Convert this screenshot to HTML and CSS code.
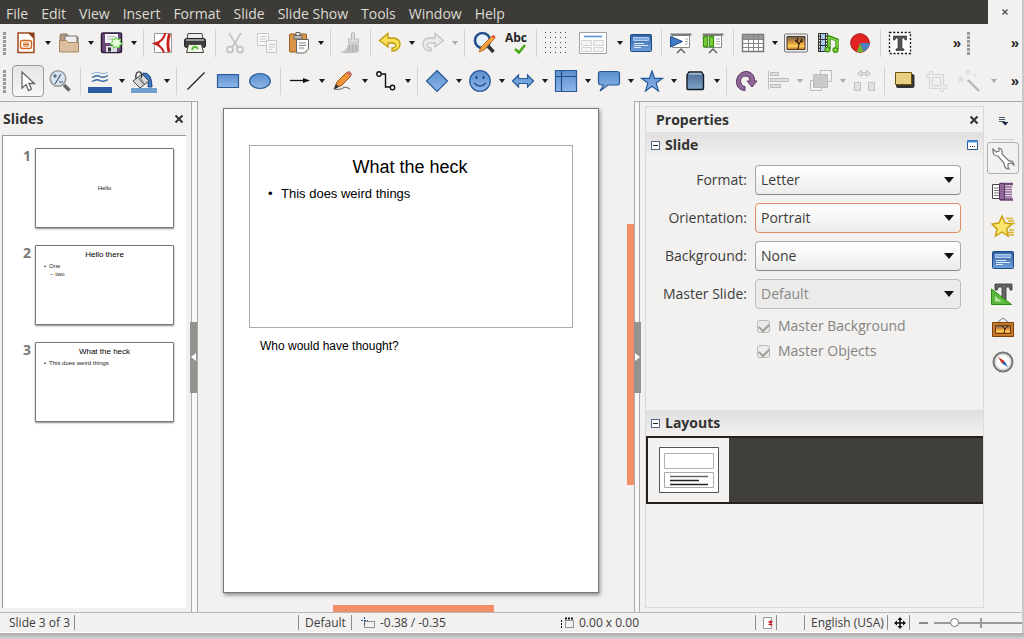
FILE: index.html
```html
<!DOCTYPE html>
<html lang="en">
<head>
  <meta charset="UTF-8">
  <title>Impress</title>
  <link rel="stylesheet" href="styles.css">
</head>
<body>

<!-- shared gradients -->
<svg class="defs" width="0" height="0" aria-hidden="true">
  <defs>
    <linearGradient id="blue" x1="0" y1="0" x2="0" y2="1"><stop offset="0" stop-color="#5b8fcf"/><stop offset="1" stop-color="#8cb6e6"/></linearGradient>
    <linearGradient id="deep" x1="0" y1="0" x2="0" y2="1"><stop offset="0" stop-color="#3465a4"/><stop offset="1" stop-color="#6f9fd8"/></linearGradient>
    <linearGradient id="sunset" x1="0" y1="0" x2="0" y2="1"><stop offset="0" stop-color="#6b5a50"/><stop offset=".5" stop-color="#e59a3a"/><stop offset=".75" stop-color="#ffd25a"/><stop offset="1" stop-color="#c8641e"/></linearGradient>
    <linearGradient id="cube" x1="0" y1="0" x2="0" y2="1"><stop offset="0" stop-color="#4a6a8c"/><stop offset="1" stop-color="#7fa5cc"/></linearGradient>
  </defs>
</svg>

<div class="window">

  <header class="menubar">
    <nav class="menus">
      <a href="#">File</a>
      <a href="#">Edit</a>
      <a href="#">View</a>
      <a href="#">Insert</a>
      <a href="#">Format</a>
      <a href="#">Slide</a>
      <a href="#">Slide Show</a>
      <a href="#">Tools</a>
      <a href="#">Window</a>
      <a href="#">Help</a>
    </nav>
    <button class="doc-close" aria-label="Close document"><svg width="8" height="8" viewBox="0 0 8 8"><path d="M1.5 1.5l5 5M6.5 1.5l-5 5" stroke="#4c4c4c" stroke-width="1.3"/></svg></button>
  </header>

  <!-- standard toolbar -->
  <div class="toolbar standard">
    <span class="grip"></span>
    <button class="tool" aria-label="New"><svg width="24" height="24" viewBox="0 0 24 24"><path d="M4 2h11l5 5v14.500H4z" fill="#fff" stroke="#a0481c" stroke-width="1.500"/><path d="M14 1.500h6.500V8z" fill="#8a3a12"/><rect x="6.500" y="9.500" width="11" height="8" rx="2" fill="none" stroke="#d3691f" stroke-width="1.500"/><path d="M9 12h6M9 13.500h6M9 15h6" stroke="#d3691f"/></svg></button>
    <button class="drop" aria-label="New options"></button>
    <button class="tool" aria-label="Open"><svg width="24" height="24" viewBox="0 0 24 24"><path d="M3 19V4l1-1h6l2 3h9v13z" fill="#b39a80" stroke="#8f7558"/><path d="M8 5h12v7H8z" fill="#eee" stroke="#777"/><path d="M2.500 21V9.500h7l2 2h10V21z" fill="#d9bf9e" stroke="#a58763"/></svg></button>
    <button class="drop" aria-label="Open options"></button>
    <button class="tool" aria-label="Save"><svg width="24" height="24" viewBox="0 0 24 24"><rect x="1.500" y="2" width="20" height="19.500" rx="1.500" fill="#6b4a78" stroke="#2f1c3b" stroke-width="1.500"/><path d="M5 3h13v9H5z" fill="#f5f5f5"/><path d="M7 5.500h8M7 8h6" stroke="#bbb"/><path d="M6 15h11v6H6z" fill="#ddd"/><path d="M8 16.500h3v4H8z" fill="#333"/><path d="M15.500 6l2 2.500 3-.5-.5 3 2.500 2-3 1-.5 3-3-1.500-2.500 1.500-.5-3-3-1 2.500-2-.5-3 3 .5z" fill="#e6ffd9" stroke="#5fd03f"/></svg></button>
    <button class="drop" aria-label="Save options"></button>
    <span class="sep"></span>
    <button class="tool" aria-label="Export as PDF"><svg width="24" height="24" viewBox="0 0 24 24"><path d="M3.500 2.500h17v19h-17z" fill="#fdfdfd" stroke="#999"/><path d="M14.500 2C13 7 9 11.500 4 12.500c4 1.500 7.500 5 9 9" fill="none" stroke="#c8201c" stroke-width="2"/><path d="M3 12.500l6-2.500-1 4.500z" fill="#c8201c"/><path d="M18.500 3q-3 9-.5 18" fill="none" stroke="#c8201c" stroke-width="2.800"/></svg></button>
    <button class="tool" aria-label="Print"><svg width="24" height="24" viewBox="0 0 24 24"><path d="M5 2.500h14l1 6H4z" fill="#eee" stroke="#444"/><rect x="1.500" y="7.500" width="21" height="9" rx="2" fill="#3c3f3d" stroke="#222"/><path d="M3 9h18" stroke="#999" stroke-width="2"/><path d="M5.500 13.500h13l2 8h-17z" fill="#eef6e4" stroke="#444"/><path d="M9 19c1-4 4-4 6-1" fill="none" stroke="#5aba35" stroke-width="2"/></svg></button>
    <span class="sep"></span>
    <button class="tool" aria-label="Cut" disabled><svg width="24" height="24" viewBox="0 0 24 24" fill="none" stroke="#c4c4c4"><path d="M6 2l8.500 14M18 2L9.500 16" stroke-width="1.700"/><circle cx="7" cy="18.500" r="3" stroke-width="1.800"/><circle cx="17" cy="18.500" r="3" stroke-width="1.800"/></svg></button>
    <button class="tool" aria-label="Copy" disabled><svg width="24" height="24" viewBox="0 0 24 24" fill="#f7f7f7" stroke="#c8c8c8"><path d="M2.500 2.500h11v12h-11z"/><path d="M5 5.500h6M5 8h6M5 10.500h6"/><path d="M11.500 9.500h10v12h-10z"/><path d="M14 13.500h6M14 16h6M14 18.500h3"/></svg></button>
    <button class="tool" aria-label="Paste"><svg width="24" height="24" viewBox="0 0 24 24"><rect x="2.500" y="3" width="17" height="18" rx="1" fill="#dc9547" stroke="#9a5d1c"/><path d="M7 4.500h8V8H7z" fill="#bbb" stroke="#666"/><path d="M9 1.500h4v3H9z" fill="#eee" stroke="#666"/><path d="M9.500 8.500h12V18l-4 4h-8z" fill="#fafafa" stroke="#666"/><path d="M12 12h7M12 14.500h7M12 17h5" stroke="#888"/></svg></button>
    <button class="drop" aria-label="Paste options"></button>
    <span class="sep"></span>
    <button class="tool" aria-label="Clone formatting" disabled><svg width="24" height="24" viewBox="0 0 24 24"><path d="M13.500 2q2-1 3 0v6h4v4h-10V8h3z" fill="#dcdcdc" stroke="#b8b8b8"/><path d="M10 13h11v7q-1 2-7 2-9 1-12-1 7-1 8-8z" fill="#c6c6c6"/><path d="M12 14l-2 6M15 14l-1 7M18 14v7" stroke="#aaa"/></svg></button>
    <span class="sep"></span>
    <button class="tool" aria-label="Undo"><svg width="24" height="24" viewBox="0 0 24 24"><path d="M1.500 9.500l8.500-7v4.500h5c10 0 9 13-1 13v-3c5 0 5-5 .5-5H10v4z" fill="#f8e05a" stroke="#c09a08" stroke-width="1.300"/></svg></button>
    <button class="drop" aria-label="Undo list"></button>
    <button class="tool" aria-label="Redo" disabled><svg width="24" height="24" viewBox="0 0 24 24"><path d="M22.500 9.500L14 2.500V7H9C-1 7 0 20 10 20v-3c-5 0-5-5-.5-5H14v4z" fill="#ebebeb" stroke="#c4c4c4" stroke-width="1.300"/></svg></button>
    <button class="drop" aria-label="Redo list" disabled></button>
    <span class="sep"></span>
    <button class="tool" aria-label="Find and replace"><svg width="24" height="24" viewBox="0 0 24 24"><path d="M16 15l5.500 6" stroke="#333" stroke-width="3.500"/><circle cx="10.500" cy="9.500" r="7.500" fill="#e8f0fa" stroke="#234f8d" stroke-width="2.600"/><path d="M7 21l2-5L20 5l2.500 2.500L12 19z" fill="#f5a13c" stroke="#a85a10" stroke-width=".8"/><path d="M20 5l2.500 2.500 1-1.500-2-2z" fill="#e33"/></svg></button>
    <button class="tool spell" aria-label="Spelling"><span>Abc</span><svg width="14" height="10" viewBox="0 0 14 10"><path d="M2 5l4 3.500L12 1" fill="none" stroke="#4ba818" stroke-width="2.600"/></svg></button>
    <span class="sep"></span>
    <button class="tool" aria-label="Display grid"><svg width="24" height="24" viewBox="0 0 24 24"><g stroke="#444" stroke-dasharray="1 4" stroke-width="1"><path d="M1 1.500h22M1 6.500h22M1 11.500h22M1 16.500h22M1 21.500h22"/></g></svg></button>
    <button class="tool wide" aria-label="Display views"><svg width="28" height="24" viewBox="0 0 28 24"><path d="M.5 1.500h27v21H.5z" fill="#fff" stroke="#a0a0a0"/><path d="M5 5.500h18" stroke="#5b93d8" stroke-width="1.600"/><path d="M2.500 9.500h10v5h-10zM14.500 9.500h10v5h-10zM2.500 16.500h10v4h-10zM14.500 16.500h10v4h-10z" fill="#f4f4f4" stroke="#d4d4d4"/></svg></button>
    <button class="drop" aria-label="Views list"></button>
    <button class="tool" aria-label="Master slide"><svg width="24" height="24" viewBox="0 0 24 24"><rect x="1.500" y="3.500" width="21" height="17" rx="1" fill="url(#deep)" stroke="#204a87"/><path d="M4.500 6.500h15v3h-15z" fill="#7eabe0" stroke="#dbe9f8" stroke-width=".7"/><path d="M5 12.500h10M5 14.500h14M5 16.500h7" stroke="#dbe9f8"/></svg></button>
    <span class="sep"></span>
    <button class="tool" aria-label="Start from first slide"><svg width="24" height="24" viewBox="0 0 24 24"><path d="M8 22l4-4 4 4" fill="none" stroke="#666" stroke-width="1.500"/><path d="M3.500 4.500h17v12h-17z" fill="#fff" stroke="#888"/><path d="M1.500 3.500h21" stroke="#777" stroke-width="2"/><path d="M16 8h3M16 10.500h3M16 13h3" stroke="#aaa"/><path d="M1.500 5.500l12 5-12 5.500z" fill="#3f7bc2" stroke="#204a87"/></svg></button>
    <button class="tool" aria-label="Start from current slide"><svg width="24" height="24" viewBox="0 0 24 24"><path d="M8 22l4-4 4 4" fill="none" stroke="#666" stroke-width="1.500"/><path d="M3.500 4.500h17v12h-17z" fill="#fff" stroke="#888"/><path d="M1.500 3.500h21" stroke="#777" stroke-width="2"/><path d="M15 8h4M15 10.500h4M15 13h4" stroke="#aaa"/><path d="M2.500 5.500h4v10h-4zM8.500 5.500h4v10h-4z" fill="#7bd13b" stroke="#3e9210" stroke-width="1.300"/></svg></button>
    <span class="sep"></span>
    <button class="tool" aria-label="Table"><svg width="24" height="24" viewBox="0 0 24 24"><path d="M1.500 3.500h21v17h-21z" fill="#fff" stroke="#777" stroke-width="1.400"/><path d="M2 4h20v4H2z" fill="#999"/><path d="M2 8.500h20M2 12.500h20M2 16.500h20M7.500 4v16M12.500 4v16M17.500 4v16" stroke="#888"/></svg></button>
    <button class="drop" aria-label="Table size"></button>
    <button class="tool" aria-label="Image"><svg width="24" height="24" viewBox="0 0 24 24"><rect x=".5" y="3" width="23" height="18" rx="1" fill="#eee" stroke="#777"/><path d="M3 5.500h18v13H3z" fill="url(#sunset)" stroke="#4a3a2a"/><path d="M14 18l1-5-4-4M15 13l3-5M13.500 11V7M16 11l3-1" stroke="#2f1a0a" stroke-width="1.200" fill="none"/></svg></button>
    <button class="tool" aria-label="Audio or video"><svg width="24" height="24" viewBox="0 0 24 24"><path d="M2 2h10v19H2z" fill="#333"/><path d="M5 3h4v5H5zM5 9h4v5H5zM5 15h4v5H5z" fill="#a9c9ee"/><path d="M3.500 3v18M10.500 3v18" stroke="#fff" stroke-dasharray="1.500 1.500"/><path d="M13 18V6l8 3v9" fill="none" stroke="#3e9210" stroke-width="3.400"/><circle cx="11.500" cy="18.500" r="2.300" fill="#8be04a" stroke="#3e9210" stroke-width="1.500"/><circle cx="19.500" cy="19" r="2.300" fill="#8be04a" stroke="#3e9210" stroke-width="1.500"/><path d="M13 16V6.500l8 3V17" fill="none" stroke="#8be04a" stroke-width="1.300"/></svg></button>
    <button class="tool" aria-label="Chart"><svg width="24" height="24" viewBox="0 0 24 24"><circle cx="12" cy="12" r="9.300" fill="#e32424" stroke="#a81010"/><path d="M12 12h9.500a9.500 9.500 0 0 1-6 8.500z" fill="#4a82c8"/><path d="M12 12l3.500 9h-6.500z" fill="#62b92c"/></svg></button>
    <span class="sep"></span>
    <button class="tool" aria-label="Text box"><svg width="24" height="24" viewBox="0 0 24 24"><path d="M1.500 1.500h21v21h-21z" fill="#fff" stroke="#111" stroke-width="1.300" stroke-dasharray="2 1.800"/><path d="M5.500 5h13v4h-1.500l-.5-2h-2.500v10.500l2 .5v1.500H8V18l2-.5V7H7.500L7 9H5.500z" fill="#555" stroke="#222" stroke-width=".6"/></svg></button>
    <button class="more first" aria-label="More commands">»</button>
    <span class="grip"></span>
    <button class="more" aria-label="More commands">»</button>
  </div>

  <!-- drawing toolbar -->
  <div class="toolbar drawing">
    <span class="grip"></span>
    <button class="tool active" aria-label="Select"><svg width="24" height="24" viewBox="0 0 24 24"><path d="M6 3v16l4-3.500 2.500 6 3-1.500L13 14.500h5.500z" fill="#fff" stroke="#666" stroke-width="1.300"/></svg></button>
    <button class="tool" aria-label="Zoom and pan"><svg width="24" height="24" viewBox="0 0 24 24"><path d="M16 16l5.500 5.500" stroke="#666" stroke-width="3.600"/><circle cx="10" cy="9.500" r="7.800" fill="#d7e4f2" stroke="#999" stroke-width="1.600"/><path d="M5 7h4M7 5v4M13 5L7 15M11 13h4" stroke="#44546a" stroke-width="1.100"/></svg></button>
    <span class="sep"></span>
    <button class="tool" aria-label="Line color"><svg width="24" height="24" viewBox="0 0 24 24"><path d="M3 5q5-3 9-1t8-1" fill="none" stroke="#8aaedb"/><path d="M4 8.500q5-3 8-1t8-1M4 12.500q5-3 8-1t8-1" fill="none" stroke="#3465a4" stroke-width="1.400"/><path d="M0 18h24v6H0z" fill="#2a5da4"/></svg></button>
    <button class="drop" aria-label="Line colors"></button>
    <button class="tool fill" aria-label="Area color"><svg width="26" height="24" viewBox="0 0 26 24"><path d="M12 4q9-1 9 14h-4q1-9-5-10z" fill="#3d77bd" stroke="#204a87"/><path d="M2 12l9-7 7 7-9 7z" fill="#d5d8da" stroke="#444"/><path d="M5 10q-1-8 4-7 3 2 1 6" fill="none" stroke="#333" stroke-width="1.300"/><path d="M8 9l5 6" stroke="#888" stroke-width="2"/><path d="M0 19h26v5H0z" fill="#729fcf"/></svg></button>
    <button class="drop" aria-label="Area colors"></button>
    <span class="sep"></span>
    <button class="tool" aria-label="Line"><svg width="24" height="24" viewBox="0 0 24 24"><path d="M3.500 20.500l17-17" stroke="#222" stroke-width="1.300"/></svg></button>
    <button class="tool" aria-label="Rectangle"><svg width="24" height="24" viewBox="0 0 24 24"><path d="M1.500 5.500h21v13h-21z" fill="url(#blue)" stroke="#285a9b" stroke-width="1.200"/></svg></button>
    <button class="tool" aria-label="Ellipse"><svg width="24" height="24" viewBox="0 0 24 24"><ellipse cx="12" cy="12" rx="10.300" ry="7.500" fill="url(#blue)" stroke="#285a9b" stroke-width="1.200"/></svg></button>
    <span class="sep"></span>
    <button class="tool" aria-label="Arrow"><svg width="24" height="24" viewBox="0 0 24 24"><path d="M2 11.500h14" stroke="#111" stroke-width="1.300"/><path d="M15 9l7 2.500-7 2.500z" fill="#111"/></svg></button>
    <button class="drop" aria-label="Arrows"></button>
    <button class="tool" aria-label="Curve"><svg width="24" height="24" viewBox="0 0 24 24"><path d="M3 20q7 1 9-1t7 1" fill="none" stroke="#555"/><path d="M4 18l2-5L16 3l4 4L10 17z" fill="#f2953a" stroke="#9c5610"/><path d="M15.500 3.500l4 4 1.500-2.500-3-3z" fill="#e8605c" stroke="#999" stroke-width=".6"/><path d="M2.500 20.500L5 15l3 3z" fill="#333"/></svg></button>
    <button class="drop" aria-label="Curves"></button>
    <button class="tool" aria-label="Connector"><svg width="24" height="24" viewBox="0 0 24 24" fill="#fff" stroke="#111" stroke-width="1.400"><path d="M7 5h4.500v13H17" fill="none"/><circle cx="5" cy="5" r="2.200"/><circle cx="18.500" cy="18.500" r="2.200"/></svg></button>
    <button class="drop" aria-label="Connectors"></button>
    <span class="sep"></span>
    <button class="tool" aria-label="Basic shapes"><svg width="24" height="24" viewBox="0 0 24 24"><path d="M12 1.500L22.500 12 12 22.500 1.500 12z" fill="url(#blue)" stroke="#285a9b" stroke-width="1.200"/></svg></button>
    <button class="drop" aria-label="Basic shapes list"></button>
    <button class="tool" aria-label="Symbol shapes"><svg width="24" height="24" viewBox="0 0 24 24"><circle cx="12" cy="12" r="10.300" fill="url(#blue)" stroke="#285a9b" stroke-width="1.200"/><path d="M8.500 7v3M15.500 7v3" fill="none" stroke="#204a87" stroke-width="1.800"/><path d="M6 14q6 6 12 0" fill="none" stroke="#204a87" stroke-width="1.300"/></svg></button>
    <button class="drop" aria-label="Symbol shapes list"></button>
    <button class="tool" aria-label="Block arrows"><svg width="24" height="24" viewBox="0 0 24 24"><path d="M1.500 12l6-6v3.500h9V6l6 6-6 6v-3.500h-9V18z" fill="url(#blue)" stroke="#285a9b" stroke-width="1.200"/></svg></button>
    <button class="drop" aria-label="Block arrows list"></button>
    <button class="tool" aria-label="Flowchart"><svg width="24" height="24" viewBox="0 0 24 24"><path d="M1.500 1.500h21v21h-21z" fill="url(#blue)" stroke="#285a9b" stroke-width="1.200"/><path d="M7.500 2v20M2 7.500h20" stroke="#204a87" stroke-width="1.200"/></svg></button>
    <button class="drop" aria-label="Flowchart list"></button>
    <button class="tool" aria-label="Callouts"><svg width="24" height="24" viewBox="0 0 24 24"><path d="M4 2.500h16q2.500 0 2.500 2v9q0 2.500-2.500 2.500h-9l-8 6 3.500-6H4q-2.500 0-2.500-2.500v-9q0-2 2.500-2z" fill="url(#blue)" stroke="#285a9b" stroke-width="1.200"/></svg></button>
    <button class="drop" aria-label="Callouts list"></button>
    <button class="tool" aria-label="Stars"><svg width="24" height="24" viewBox="0 0 24 24"><path d="M12 2l2.600 7.300h7.900l-6.300 4.800 2.300 7.900-6.500-4.700L5.500 22l2.300-7.900L1.500 9.300h7.900z" fill="url(#blue)" stroke="#285a9b" stroke-width="1.200"/></svg></button>
    <button class="drop" aria-label="Stars list"></button>
    <button class="tool" aria-label="3D objects"><svg width="24" height="24" viewBox="0 0 24 24"><path d="M6 3h12.500l2 3v13.500q0 1-1 1H5q-1 0-1-1V6z" fill="url(#cube)" stroke="#111a24" stroke-width="1.400"/><path d="M6.500 3.800h11.500l1.500 2h-15z" fill="#9fb6cf"/></svg></button>
    <button class="drop" aria-label="3D objects list"></button>
    <span class="sep"></span>
    <button class="tool" aria-label="Rotate"><svg width="24" height="24" viewBox="0 0 24 24"><path d="M11 21.500C-1 21.500 0 3 12 2.500c6 0 9 5 8.500 9.500H23l-5 6-5-6h3c0-3-2-5-4.500-5C5 7 5 17 11 17.500z" fill="#8f6797" stroke="#5c3566"/></svg></button>
    <button class="tool" aria-label="Align" disabled><svg width="24" height="24" viewBox="0 0 24 24" fill="#dedede" stroke="#bbb"><path d="M2.500 2v18"/><path d="M4.500 3.500h8v3h-8zM4.500 9.500h18v3h-18zM4.500 15.500h10v3h-10z"/></svg></button>
    <button class="drop" aria-label="Align list" disabled></button>
    <button class="tool" aria-label="Arrange" disabled><svg width="24" height="24" viewBox="0 0 24 24" stroke="#bbb"><path d="M11.500 1.500h11v11h-11zM1.500 11.500h11v10h-11z" fill="#f4f4f4"/><path d="M4.500 5.500h14v13h-14z" fill="#c9c9c9"/></svg></button>
    <button class="drop" aria-label="Arrange list" disabled></button>
    <button class="tool" aria-label="Distribute" disabled><svg width="24" height="24" viewBox="0 0 24 24" fill="#e2e2e2" stroke="#c0c0c0"><path d="M5.500 4.500l4-3v2h5v-2l4 3-4 3v-2h-5v2z"/><path d="M2.500 13.500h6v8h-6zM16.500 13.500h6v8h-6z"/></svg></button>
    <span class="sep"></span>
    <button class="tool" aria-label="Shadow"><svg width="24" height="24" viewBox="0 0 24 24"><rect x="4" y="5" width="18.500" height="14" rx="2" fill="#333"/><path d="M3.500 3.500h16v12h-16z" fill="#e9cf82" stroke="#6b5312"/></svg></button>
    <button class="tool" aria-label="Crop" disabled><svg width="24" height="24" viewBox="0 0 24 24" fill="#ececec" stroke="#d6d6d6"><path d="M2.500 5.500h3v-3h3v3h11v11h3v3h-3v3h-3v-3h-11v-11h-3z"/><path d="M8.500 8.500h8v8h-8z" fill="#f2f1f0"/></svg></button>
    <button class="tool effects" aria-label="Effects" disabled><svg width="26" height="24" viewBox="0 0 26 24"><path d="M11 11l11 11" stroke="#b8b8b8" stroke-width="2.400"/><path d="M4 6l1.200 2.500 2.800.2-2 2 .6 2.800L4 12l-2.500 1.500.6-2.800-2-2 2.700-.2zM11 0l1 2 2 .3-1.500 1.500.3 2L11 5l-2 1 .5-2L8 2.300l2-.3zM18 4l.8 1.500h1.600L19 7l.5 1.600L18 8l-1.500.6L17 7l-1.300-1.500h1.500z" fill="#dedede"/></svg></button>
    <button class="drop" aria-label="Effects list" disabled></button>
    <button class="more" aria-label="More commands">»</button>
  </div>

  <main class="main">

    <aside class="slides">
      <div class="slides-head">
        <h2>Slides</h2>
        <button class="close" aria-label="Close slide pane"><svg width="10" height="10" viewBox="0 0 10 10"><path d="M1.500 1.500l7 7M8.500 1.500l-7 7" stroke="#333" stroke-width="2"/></svg></button>
      </div>
      <ol class="slide-list">
        <li>
          <span class="num">1</span>
          <div class="thumb centered"><p>Hello</p></div>
        </li>
        <li>
          <span class="num">2</span>
          <div class="thumb">
            <h3>Hello there</h3>
            <p class="b1">One</p>
            <p class="b2">two</p>
          </div>
        </li>
        <li>
          <span class="num">3</span>
          <div class="thumb">
            <h3>What the heck</h3>
            <p class="b1">This does weird things</p>
          </div>
        </li>
      </ol>
    </aside>

    <div class="splitter"><button aria-label="Hide slide pane"><svg width="5" height="8" viewBox="0 0 5 8"><path d="M5 0v8L0 4z" fill="#fff"/></svg></button></div>

    <section class="workspace">
      <article class="page">
        <div class="frame">
          <h1>What the heck</h1>
          <ul><li>This does weird things</li></ul>
        </div>
        <p class="notes">Who would have thought?</p>
      </article>
      <div class="vscroll"><span></span></div>
      <div class="hscroll"><span></span></div>
    </section>

    <div class="splitter right"><button aria-label="Hide sidebar"><svg width="5" height="8" viewBox="0 0 5 8"><path d="M0 0v8l5-4z" fill="#fff"/></svg></button></div>

    <aside class="sidebar">
      <div class="panel">
        <div class="panel-title">
          <h2>Properties</h2>
          <button class="close" aria-label="Close sidebar"><svg width="10" height="10" viewBox="0 0 10 10"><path d="M1.500 1.500l7 7M8.500 1.500l-7 7" stroke="#333" stroke-width="2"/></svg></button>
        </div>

        <section class="deck slide-deck">
          <div class="deck-head">
            <button class="fold" aria-label="Collapse Slide"></button>
            <h3>Slide</h3>
            <button class="dialog" aria-label="More options"><svg width="11" height="10" viewBox="0 0 11 10"><path d="M.5.5h10v9H.5z" fill="#fff" stroke="#2a5798"/><path d="M0 1.500h11" stroke="#4a90e2" stroke-width="2"/><path d="M3 6.500h1M5 6.500h1M7 6.500h1" stroke="#222"/></svg></button>
          </div>
          <form class="props">
            <label for="format">Format:</label>
            <div class="pick"><select id="format"><option>Letter</option></select></div>
            <label for="orientation">Orientation:</label>
            <div class="pick focus"><select id="orientation"><option>Portrait</option></select></div>
            <label for="background">Background:</label>
            <div class="pick"><select id="background"><option>None</option></select></div>
            <label for="master">Master Slide:</label>
            <div class="pick"><select id="master" disabled><option>Default</option></select></div>
            <div class="checks">
              <label><input type="checkbox" checked disabled>Master Background</label>
              <label><input type="checkbox" checked disabled>Master Objects</label>
            </div>
          </form>
        </section>

        <section class="deck">
          <div class="deck-head">
            <button class="fold" aria-label="Collapse Layouts"></button>
            <h3>Layouts</h3>
          </div>
          <div class="layouts">
            <button aria-label="Title, notes"><svg width="60" height="46" viewBox="0 0 60 46"><path d="M.5.5h59v45H.5z" fill="#fff" stroke="#555"/><path d="M5.500 6.500h49v15h-49z" fill="#fff" stroke="#aab2b8"/><path d="M5.500 25.500h49v15h-49z" fill="#fff" stroke="#aaa"/><path d="M11 29.500h38" stroke="#666" stroke-width="1.500"/><path d="M11 33.500h29M11 37.500h38" stroke="#222" stroke-width="1.500"/></svg></button>
          </div>
        </section>
      </div>

      <nav class="tabs">
        <button class="settings" aria-label="Sidebar settings"><svg width="11" height="10" viewBox="0 0 11 10"><path d="M1 1.500h6M1 3.500h6M1 5.500h6" stroke="#456"/><path d="M4 6h6.500L7.200 9.500z" fill="#1b2b4b"/></svg></button>
        <button class="tab active" aria-label="Properties"><svg width="24" height="24" viewBox="0 0 24 24"><path d="M2 3l3 3 3-1 0-3q4 1 3 6l7 7q4-1 5 4l-3-2-3 1 0 3 1 2q-5 0-5-6L7 10Q1 10 2 3z" fill="#fff" stroke="#777" stroke-width="1.200"/></svg></button>
        <button class="tab" aria-label="Slide transition"><svg width="24" height="24" viewBox="0 0 24 24"><path d="M1.500 4.500h8v14h-8z" fill="#fff" stroke="#444"/><path d="M3 8h5M3 10.500h5M3 13h5M3 15.500h5" stroke="#777"/><path d="M9 4h13M9 19.500h13" stroke="#74477e" stroke-width="2.500"/><path d="M8.500 3.500h5v16h-5z" fill="#8f6797" stroke="#5c3566"/><path d="M14 7h7M14 9.500h7M14 12h7M14 14.500h7M14 17h7" stroke="#8f6797" stroke-width="1.300"/></svg></button>
        <button class="tab" aria-label="Animation"><svg width="24" height="24" viewBox="0 0 24 24"><path d="M15 4.500h7M17 7h6M18 9.500h6M18 16h5M17 18.500h6M16 21h7" stroke="#dcb42c" stroke-width="1.300"/><path d="M11 2l3 7 7 1-5.500 5 1.500 7-6-4-6.500 4L6 15 1 10l7-1z" fill="#fbe670" stroke="#c99d0c" stroke-width="1.400"/></svg></button>
        <button class="tab" aria-label="Master slides"><svg width="24" height="24" viewBox="0 0 24 24"><rect x="1.500" y="3.500" width="21" height="17" rx="1" fill="url(#deep)" stroke="#204a87"/><path d="M4.500 6.500h15v3h-15z" fill="#7eabe0" stroke="#dbe9f8" stroke-width=".7"/><path d="M5 12.500h10M5 14.500h14M5 16.500h7" stroke="#dbe9f8"/></svg></button>
        <button class="tab" aria-label="Styles"><svg width="24" height="24" viewBox="0 0 24 24"><path d="M4 2h17v6h-2l-.5-3H15v15h-4V5H7l-.5 3H4z" fill="#666" stroke="#333" stroke-width=".8"/><path d="M.5 7v15.500h20z" fill="#5cb83c" stroke="#2f8a14"/><path d="M4 14v5.500h7z" fill="#b5e3a0"/></svg></button>
        <button class="tab" aria-label="Gallery"><svg width="24" height="24" viewBox="0 0 24 24"><path d="M7 6l5-4 5 4" fill="none" stroke="#777"/><path d="M1.500 6.500h21v14h-21z" fill="#c8782a" stroke="#7a4310"/><path d="M4.500 9.500h15v8h-15z" fill="url(#sunset)" stroke="#6b3d10"/><path d="M13 17l1-4-3-3M14 13l3-3" stroke="#2f1a0a" fill="none"/></svg></button>
        <button class="tab" aria-label="Navigator"><svg width="24" height="24" viewBox="0 0 24 24"><circle cx="12" cy="12" r="9.500" fill="#f7f7f7" stroke="#777" stroke-width="2"/><circle cx="12" cy="12" r="7.500" fill="#fff" stroke="#ccc"/><path d="M7 7l6.500 4-2.500 2.500z" fill="#d42a1e"/><path d="M17 17l-3.500-6-2.500 2.500z" fill="#2d5fa5"/></svg></button>
      </nav>
    </aside>
  </main>

  <footer class="status">
    <span class="cell slide-no">Slide 3 of 3</span>
    <span class="cell blank"></span>
    <span class="cell style">Default</span>
    <span class="cell pos"><svg width="15" height="12" viewBox="0 0 15 12"><path d="M3.500 0v8M0 3.500h7" stroke="#2a55a0" stroke-dasharray="2 1"/><path d="M3.500 4.500h10v6h-10z" fill="none" stroke="#333" stroke-dasharray="1 1"/></svg>-0.38 / -0.35</span>
    <span class="cell size"><svg width="15" height="12" viewBox="0 0 15 12"><path d="M1.500 3v9" stroke="#111" stroke-dasharray="2 1"/><path d="M5 1.500h9" stroke="#111" stroke-width="2" stroke-dasharray="2 1"/><path d="M5.500 3.500h8v7h-8z" fill="none" stroke="#333" stroke-dasharray="1 1"/></svg>0.00 x 0.00</span>
    <span class="cell modified"><svg width="12" height="12" viewBox="0 0 12 12"><path d="M1.500.5h8v11h-8z" fill="#fff" stroke="#999"/><path d="M8.500 3.500v5M6.500 4.500l4 3M10.500 4.500l-4 3" stroke="#c8141e" stroke-width="1.300"/></svg></span>
    <span class="cell sign"></span>
    <span class="cell lang">English (USA)</span>
    <span class="cell fit"><svg width="12" height="12" viewBox="0 0 12 12"><path d="M6 1v10M1 6h10" stroke="#111" stroke-width="1.600"/><path d="M6 0l2.500 3h-5zM6 12l2.500-3h-5zM0 6l3-2.500v5zM12 6L9 3.500v5z" fill="#111"/></svg></span>
    <button class="zoom-out" aria-label="Zoom out"></button>
    <input class="zoom" type="range" min="0" max="100" value="20" aria-label="Zoom">
  </footer>
</div>

</body>
</html>
```
FILE: styles.css
```css
* {
  box-sizing: border-box;
}

body {
  margin: 0;
  min-height: 100vh;
  display: flex;
  flex-direction: column;
  background: linear-gradient(to top, #d4d4d4, #adadad 6px, #c9c9c9 6px);
  font: 14px/20px "Open Sans", "Noto Sans", sans-serif;
  color: #3c3c3c;
}

h1, h2, h3, p, ul, ol {
  margin: 0;
  padding: 0;
}

button {
  margin: 0;
  padding: 0;
  border: 0;
  background: none;
  color: inherit;
  font: inherit;
}

svg {
  display: block;
}

.defs {
  position: absolute;
}

.window {
  flex: 1;
  display: flex;
  flex-direction: column;
  margin: 0 2px 6px 0;
  background: #f2f1f0;
}

/* menu bar */

.menubar {
  display: flex;
  justify-content: space-between;
  height: 24px;
  background: #3c3b37;
}

.menus {
  display: flex;
  gap: 13px;
  padding: 4px 6px 0;
  white-space: nowrap;
}

.menus a {
  color: #dfdbd2;
  text-decoration: none;
}

.doc-close {
  display: flex;
  align-items: center;
  justify-content: center;
  width: 34px;
  background: #f2f1f0;
}

/* toolbars */

.toolbar {
  display: flex;
  align-items: center;
  height: 38px;
  padding-left: 3px;
}

.toolbar > * {
  flex: none;
}

.drawing {
  margin-bottom: 1px;
}

.grip {
  width: 3px;
  height: 23px;
  margin-right: 4px;
  background: repeating-linear-gradient(#999 0 3px, transparent 3px 4px);
}

.drawing .grip {
  margin-right: 6px;
}

.tool {
  display: flex;
  align-items: center;
  justify-content: center;
  width: 32px;
  height: 32px;
}

.tool.active {
  border: 1px solid #9d9b98;
  border-radius: 4px;
  background: linear-gradient(#e6e5e3, #f7f7f6);
}

.wide {
  width: 42px;
}

.fill {
  width: 34px;
}

.effects {
  width: 36px;
}

.spell {
  flex-direction: column;
  font: bold 12px/12px "Open Sans", sans-serif;
  color: #222;
}

.spell svg {
  margin-left: 8px;
}

.drop {
  display: flex;
  justify-content: center;
  width: 11px;
}

.drop::before {
  content: "";
  border: 3px solid transparent;
  border-top: 4px solid #1a1a1a;
  border-bottom: 0;
}

.drop:disabled::before {
  border-top-color: #aaa;
}

.sep {
  width: 8px;
  height: 28px;
  background: linear-gradient(#d3d1cf, #d3d1cf) center / 1px 100% no-repeat;
}

.more {
  width: 14px;
  margin-left: auto;
  font: bold 15px/20px "Liberation Sans", Arial, sans-serif;
  color: #222;
}

.more.first {
  margin-right: 3px;
}

.standard .more:last-child {
  margin-left: 34px;
}

/* main area */

.main {
  flex: 1;
  display: grid;
  grid-template-columns: 190px 8px minmax(300px, 1fr) 7px 381px;
}

h2 {
  font-size: 14px;
  line-height: 20px;
}

h2, h3 {
  color: #333;
}

.slides {
  display: flex;
  flex-direction: column;
  border-top: 1px solid #aaa;
}

.slides-head {
  display: flex;
  align-items: center;
  justify-content: space-between;
  height: 33px;
  padding: 0 6px 0 3px;
}

.slide-list {
  flex: 1;
  display: flex;
  flex-direction: column;
  gap: 17px;
  margin: 0 4px 4px 2px;
  padding: 12px;
  border: 1px solid #999;
  border-width: 1px 0 0 1px;
  background: #fff;
  list-style: none;
}

.slide-list li {
  display: flex;
  gap: 4px;
}

.num {
  width: 16px;
  font-weight: bold;
  line-height: 15px;
  text-align: right;
  color: #777;
}

.thumb {
  width: 139px;
  height: 80px;
  padding: 5px 8px;
  border: 1px solid #777;
  border-radius: 1px;
  box-shadow: 0 1px 2px #888;
  background: #fff;
  font: 6px/8px "Liberation Sans", Arial, sans-serif;
  color: #222;
}

.thumb h3 {
  margin-bottom: 3px;
  font-size: 8px;
  line-height: 8px;
  font-weight: normal;
  text-align: center;
  color: #000;
}

.centered {
  display: flex;
  align-items: center;
  justify-content: center;
}

.b1::before {
  content: "•";
  margin-right: 3px;
}

.b2 {
  padding-left: 6px;
}

.b2::before {
  content: "–";
  margin-right: 2px;
}

.splitter {
  display: flex;
  flex-direction: column;
  justify-content: center;
  border-top: 1px solid #aaa;
  background: linear-gradient(to right, #aaa 1px, #f8f8f8 1px 6px, #aaa 6px 7px, transparent 7px) 1px 0 no-repeat;
}

.splitter.right {
  background: linear-gradient(to right, #aaa 1px, #f8f8f8 1px 5px, #aaa 5px 6px, transparent 6px);
}

.splitter button {
  display: flex;
  align-items: center;
  justify-content: center;
  width: 7px;
  height: 71px;
  background: #95938f;
}

.workspace {
  display: grid;
  grid-template-columns: 1fr 7px;
  grid-template-rows: 1fr 7px;
}

.page {
  margin: 7px 28px 12px 25px;
  padding: 36px 25px;
  border: 1px solid #777;
  box-shadow: 1px 2px 4px #888;
  background: #fff;
  font: 13px/16px "Liberation Sans", Arial, sans-serif;
  color: #000;
}

.frame {
  height: 183px;
  padding: 10px 18px 10px 16px;
  border: 1px solid #aaa;
}

.frame h1 {
  font-size: 18px;
  line-height: 22px;
  font-weight: normal;
  text-align: center;
}

.frame ul {
  margin-top: 8px;
  list-style: none;
}

.frame li::before {
  content: "•";
  display: inline-block;
  width: 13px;
  padding-left: 2px;
}

.notes {
  padding: 10px 11px;
  font-size: 12px;
}

.vscroll {
  grid-row: 1 / 3;
  grid-column: 2;
  display: grid;
  grid-template-rows: 123fr 262fr 127fr;
}

.vscroll span {
  grid-row: 2;
  background: #f28f69;
}

.hscroll {
  grid-row: 2;
  grid-column: 1;
  display: grid;
  grid-template-columns: 135fr 162fr 133fr;
}

.hscroll span {
  grid-column: 2;
  background: #f28f69;
}

/* sidebar */

.sidebar {
  display: flex;
  padding-left: 4px;
  border-top: 1px solid #aaa;
}

.panel {
  flex: 1;
  display: flex;
  flex-direction: column;
  margin: 4px 0;
  border: 1px solid #dcdad8;
}

.panel-title {
  display: flex;
  align-items: center;
  justify-content: space-between;
  height: 25px;
  padding: 0 4px 0 10px;
}

.deck-head {
  display: flex;
  align-items: center;
  gap: 5px;
  height: 26px;
  padding: 0 5px;
  background: linear-gradient(#e0dfdd, #f2f1f0);
}

.deck-head h3 {
  flex: 1;
  font-size: 14px;
  line-height: 20px;
}

.slide-deck {
  height: 278px;
}

.fold {
  display: flex;
  align-items: center;
  justify-content: center;
  width: 9px;
  height: 9px;
  border: 1px solid #52698a;
  background: #fff;
}

.fold::before {
  content: "";
  width: 5px;
  height: 1px;
  background: #222;
}

.props {
  display: grid;
  grid-template-columns: 101px 1fr;
  align-items: center;
  gap: 8px;
  padding: 7px 22px 0 0;
}

.props > label {
  text-align: right;
}

.pick {
  position: relative;
}

.pick::after {
  content: "";
  position: absolute;
  top: 12px;
  right: 7px;
  border: 5px solid transparent;
  border-top: 6px solid #111;
  border-bottom: 0;
  pointer-events: none;
}

select {
  display: block;
  width: 100%;
  height: 30px;
  padding: 0 5px;
  border: 1px solid #aaa8a5;
  border-bottom-color: #8a8885;
  border-radius: 4px;
  background: linear-gradient(#fff, #ececeb);
  color: #3c3c3c;
  font: inherit;
  appearance: none;
}

select:disabled {
  border-color: #bdbbb8;
  background: #ecebea;
  color: #8a8885;
  opacity: 1;
}

.focus select {
  border-color: #dd8c68;
}

.checks {
  grid-column: 2;
  display: flex;
  flex-direction: column;
  gap: 5px;
  margin-top: -1px;
  padding: 0 2px;
  color: #858380;
}

.checks label {
  display: flex;
  align-items: center;
  gap: 8px;
}

.checks input {
  display: flex;
  justify-content: center;
  width: 13px;
  height: 13px;
  margin: 0;
  padding-top: 2px;
  border: 1px solid #bbb9b6;
  border-radius: 3px;
  background: #ecebea;
  appearance: none;
}

.checks input::before {
  content: "";
  width: 8px;
  height: 5px;
  border: 2px solid #a09e9b;
  border-width: 0 0 2px 2px;
  transform: rotate(-45deg);
}

.layouts {
  display: flex;
  border: 2px solid #26201f;
  border-right: 0;
  background: #403f3a;
}

.layouts button {
  display: flex;
  align-items: center;
  justify-content: center;
  width: 81px;
  height: 64px;
  background: #f2f1f0;
}

.tabs {
  display: flex;
  flex-direction: column;
  align-items: center;
  gap: 2px;
  width: 38px;
}

.settings {
  display: flex;
  align-items: center;
  justify-content: center;
  width: 22px;
  height: 38px;
  border-bottom: 1px solid #d5d3d1;
}

.tab {
  display: flex;
  align-items: center;
  justify-content: center;
  width: 32px;
  height: 32px;
}

.tab.active {
  border: 1px solid #b0aeab;
  border-radius: 3px;
}

/* status bar */

.status {
  display: flex;
  align-items: center;
  height: 21px;
  border-top: 1px solid #bbb9b6;
  border-bottom: 1px solid #fff;
  font-size: 12px;
  line-height: 16px;
  white-space: nowrap;
}

.cell {
  display: flex;
  align-items: center;
  gap: 4px;
  height: 15px;
  padding-left: 6px;
  border-right: 1px solid #8f8d8a;
}

.slide-no {
  width: 75px;
  padding-left: 9px;
}

.blank {
  width: 224px;
}

.style {
  width: 53px;
}

.pos {
  width: 199px;
  padding-left: 9px;
  border: 0;
}

.size {
  flex: 1;
  padding-left: 9px;
}

.modified {
  width: 21px;
}

.sign {
  width: 28px;
}

.lang {
  width: 83px;
}

.fit {
  width: 22px;
}

.zoom-out {
  width: 9px;
  height: 2px;
  margin: 0 6px 0 9px;
  background: #888;
}

.zoom {
  width: 88px;
  height: 10px;
  margin: 0;
  background:
    linear-gradient(#999, #999) 46px 0 / 2px 100% no-repeat,
    linear-gradient(#999, #999) center / 100% 2px no-repeat;
  appearance: none;
}

.zoom::-webkit-slider-thumb {
  width: 9px;
  height: 9px;
  border: 1px solid #777;
  border-radius: 50%;
  background: #fff;
  appearance: none;
}
```
